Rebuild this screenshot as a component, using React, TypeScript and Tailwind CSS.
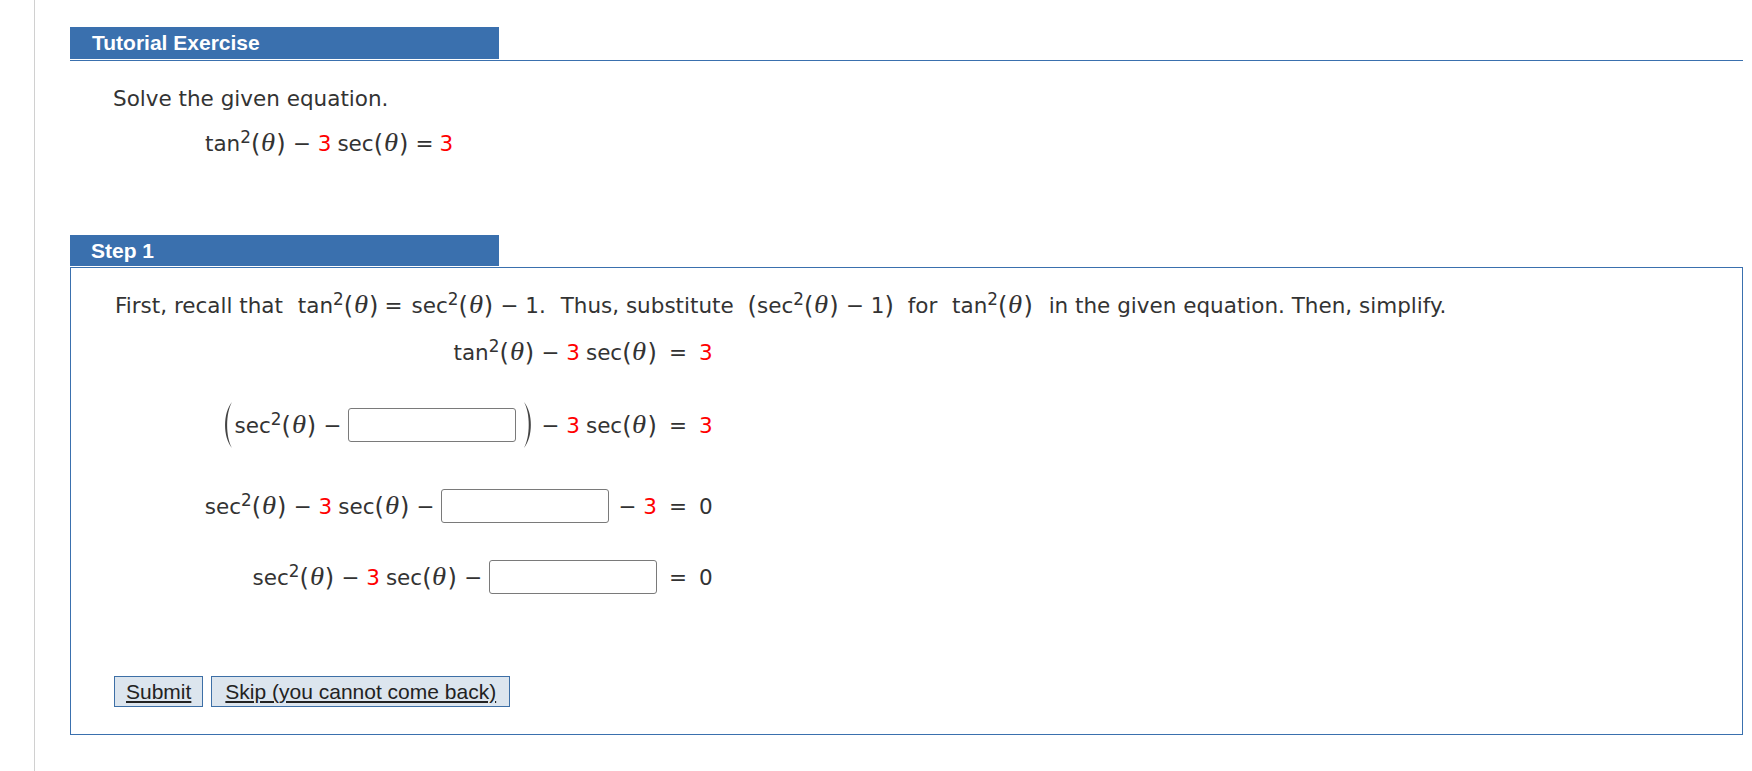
import React from "react";

const SANS = "font-['DejaVu_Sans',Verdana,sans-serif]";
const ARIAL = "font-['Liberation_Sans',Arial,sans-serif]";

function Th() {
  return (
    <span className="inline-block w-[16px] text-center leading-[0]">
      <span className="inline-block scale-x-[1.15] font-['Liberation_Serif',serif] text-[25px] italic">θ</span>
    </span>
  );
}

const P = ({ c }: { c: string }) => <span className="relative top-[1px] text-[1.12em] leading-[0]">{c}</span>;

function Fn({ name, sq }: { name: string; sq?: boolean }) {
  return (
    <span className="whitespace-nowrap">
      {name}
      {sq && <span className="relative top-[-0.45em] text-[0.78em] leading-[0]">2</span>}
      <P c="(" />
      <Th />
      <P c=")" />
    </span>
  );
}

const Op = ({ c }: { c: string }) => <span className="mx-[7px]">{c}</span>;
const Red = ({ children }: { children: React.ReactNode }) => <span className="text-[#f00]">{children}</span>;
const Sp = () => <span className="inline-block w-[6px]" />;

function Blank({ className = "" }: { className?: string }) {
  return (
    <input
      type="text"
      className={`h-[34px] w-[168px] rounded-[3px] border border-[#7a7a7a] bg-white ${className}`}
    />
  );
}

function Paren({ right }: { right?: boolean }) {
  return (
    <svg width="11" height="48" viewBox="0 0 11 48" className={right ? "-scale-x-100" : ""}>
      <path d="M10 1 C0.8 12 0.8 36 10 47 C3.6 36 3.6 12 10 1 Z" fill="#444" />
    </svg>
  );
}

function Row({ h, mt, left, right }: { h: string; mt: string; left: React.ReactNode; right: React.ReactNode }) {
  return (
    <div className={`flex items-center leading-[25px] ${h} ${mt}`}>
      <div className="flex w-[542px] items-center justify-end whitespace-nowrap">{left}</div>
      <span className="ml-[12px]">=</span>
      <span className="ml-[12px]">{right}</span>
    </div>
  );
}

export default function App() {
  return (
    <div className={`min-h-[771px] bg-white pl-[34px] pr-[9px] text-[21.5px] text-[#333] ${SANS}`}>
      <div className="min-h-[771px] border-l border-[#d0d0d0] pl-[35px] pt-[27px]">
        {/* Tutorial header */}
        <div className={`flex h-[32px] w-[429px] items-center bg-[#3a70ae] pl-[22px] text-[21px] font-bold text-white ${ARIAL}`}>
          Tutorial Exercise
        </div>
        <div className="mt-[1px] h-[1px] bg-[#3a70ae]" />

        <p className="mt-[25px] h-[25px] pl-[43px] leading-[25px]">Solve the given equation.</p>
        <div className="mt-[20px] h-[25px] pl-[135px] leading-[25px] whitespace-nowrap">
          <Fn name="tan" sq />
          <Op c="−" />
          <Red>3</Red>
          <Sp />
          <Fn name="sec" />
          <span className="ml-[7px] mr-[6px]">=</span>
          <Red>3</Red>
        </div>

        {/* Step 1 */}
        <div className={`mt-[79px] flex h-[31px] w-[429px] items-center bg-[#3a70ae] pl-[21px] text-[21px] font-bold text-white ${ARIAL}`}>
          Step 1
        </div>
        <div className="mt-[1px] border border-[#3a70ae] pb-[27px] pl-[44px] pt-[25px]">
          <p className="h-[25px] leading-[25px] whitespace-nowrap">
            First, recall that{" "}
            <span className="ml-[8px]">
              <Fn name="tan" sq />
              <span className="ml-[6px] mr-[9px]">=</span>
              <Fn name="sec" sq />
              <Op c="−" />1
            </span>
            .{" "}
            <span className="ml-[8px]">Thus, substitute</span>{" "}
            <span className="mx-[7px]">
              <P c="(" />
              <Fn name="sec" sq />
              <Op c="−" />1<P c=")" />
            </span>{" "}
            for{" "}
            <span className="mx-[8px]">
              <Fn name="tan" sq />
            </span>{" "}
            <span className="ml-[1px]">in the given equation. Then, simplify.</span>
          </p>

          <Row
            h="h-[30px]"
            mt="mt-[19px]"
            left={
              <span>
                <Fn name="tan" sq />
                <Op c="−" />
                <Red>3</Red>
                <Sp />
                <Fn name="sec" />
              </span>
            }
            right={<Red>3</Red>}
          />
          <Row
            h="h-[48px]"
            mt="mt-[34px]"
            left={
              <>
                <Paren />
                <span className="ml-[1px]">
                  <Fn name="sec" sq />
                  <Op c="−" />
                </span>
                <Blank />
                <span className="ml-[7px]">
                  <Paren right />
                </span>
                <span>
                  <Op c="−" />
                  <Red>3</Red>
                  <Sp />
                  <Fn name="sec" />
                </span>
              </>
            }
            right={<Red>3</Red>}
          />
          <Row
            h="h-[36px]"
            mt="mt-[39px]"
            left={
              <>
                <span>
                  <Fn name="sec" sq />
                  <Op c="−" />
                  <Red>3</Red>
                  <Sp />
                  <Fn name="sec" />
                  <Op c="−" />
                </span>
                <Blank className="mr-[2px]" />
                <span>
                  <Op c="−" />
                  <Red>3</Red>
                </span>
              </>
            }
            right={<span>0</span>}
          />
          <Row
            h="h-[36px]"
            mt="mt-[35px]"
            left={
              <>
                <span>
                  <Fn name="sec" sq />
                  <Op c="−" />
                  <Red>3</Red>
                  <Sp />
                  <Fn name="sec" />
                  <Op c="−" />
                </span>
                <Blank />
              </>
            }
            right={<span>0</span>}
          />

          <div className={`-ml-[1px] mt-[81px] flex gap-[8px] ${ARIAL}`}>
            <button className="h-[31px] border border-[#3d6fa6] bg-[#dce5ee] px-[11px] text-[21px] leading-[29px] text-[#222] underline">
              Submit
            </button>
            <button className="h-[31px] border border-[#3d6fa6] bg-[#dce5ee] px-[13px] text-[21px] leading-[29px] text-[#222] underline">
              Skip (you cannot come back)
            </button>
          </div>
        </div>
      </div>
    </div>
  );
}
